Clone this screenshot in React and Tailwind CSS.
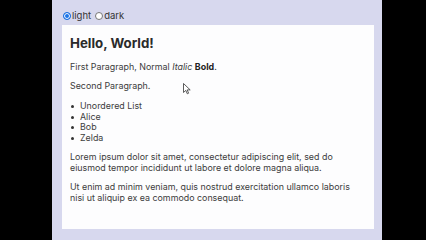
import React from "react";

function Item({ children }) {
  return (
    <li className="flex items-center">
      <span className="ml-[1px] mr-[6px] inline-block h-[3px] w-[3px] rounded-full bg-[#333]" />
      <span>{children}</span>
    </li>
  );
}

export default function App() {
  return (
    <div className="flex h-[240px] w-[426px] overflow-hidden bg-black" style={{ fontFamily: "Inter, 'Noto Sans', sans-serif" }}>
      <div className="w-[52px] shrink-0 bg-black" />
      <div className="relative flex w-[330px] shrink-0 flex-col bg-[#d7d8ee]">
        <div className="flex h-[25px] items-center pl-[11px] pt-[7px] text-[9.5px] leading-none text-[#333]">
          <span className="mr-px inline-block h-[8px] w-[8px] rounded-full border border-[#1a6fe0] bg-[#1a73e8] shadow-[inset_0_0_0_1px_white]" />
          <span>light</span>
          <span className="ml-[4px] mr-px inline-block h-[8px] w-[8px] rounded-full border border-[#777] bg-white" />
          <span>dark</span>
        </div>
        <div className="ml-[10px] mr-[8px] h-[204px] bg-[#fdfdfe] px-[8px] pt-[10px] text-[8.9px] leading-[11px] text-[#3c3c3c]">
          <h1 className="text-[13.3px] font-bold leading-[17px] text-[#2a2a2a]">Hello, World!</h1>
          <p className="mt-[9px]">First Paragraph, Normal <i>Italic</i> <b className="text-[#222]">Bold</b>.</p>
          <p className="mt-[8px]">Second Paragraph.</p>
          <ul className="mt-[10px] leading-[10.7px]">
            <Item>Unordered List</Item>
            <Item>Alice</Item>
            <Item>Bob</Item>
            <Item>Zelda</Item>
          </ul>
          <p className="mt-[7px]">Lorem ipsum dolor sit amet, consectetur adipiscing elit, sed do eiusmod tempor incididunt ut labore et dolore magna aliqua.</p>
          <p className="mt-[8px]">Ut enim ad minim veniam, quis nostrud exercitation ullamco laboris nisi ut aliquip ex ea commodo consequat.</p>
        </div>
        <svg className="absolute left-[131px] top-[83px]" width="8" height="12" viewBox="0 0 8 12">
          <path d="M0.5 0.5 L0.5 9.5 L2.8 7.4 L4.3 10.8 L5.6 10.2 L4.2 6.9 L7.2 6.9 Z" fill="white" stroke="#333" strokeWidth="0.8" strokeLinejoin="round" />
        </svg>
      </div>
      <div className="flex-1 bg-black" />
    </div>
  );
}
